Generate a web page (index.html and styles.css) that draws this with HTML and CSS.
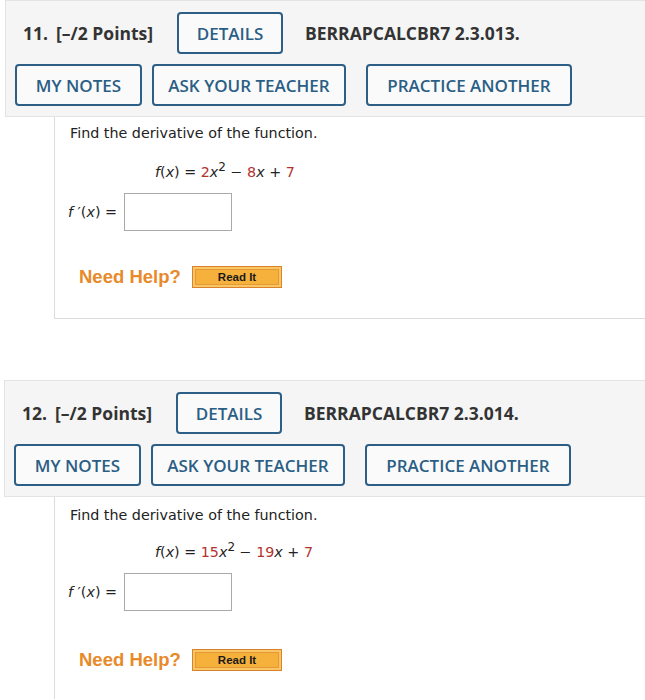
FILE: index.html
```html
<!DOCTYPE html>
<html>
<head>
<meta charset="utf-8">
<link rel="stylesheet" href="styles.css">
</head>
<body>
<div class="page">
  <section class="question">
    <div class="qhead">
      <div class="row1">
        <span class="qnum">11.</span>
        <span class="qpts">[–/2 Points]</span>
        <span class="btn b-details">DETAILS</span>
        <span class="qcode">BERRAPCALCBR7 2.3.013.</span>
      </div>
      <div class="row2">
        <span class="btn b-notes">MY NOTES</span>
        <span class="btn b-ask">ASK YOUR TEACHER</span>
        <span class="btn b-practice">PRACTICE ANOTHER</span>
      </div>
    </div>
    <div class="qbody">
      <p class="prompt">Find the derivative of the function.</p>
      <p class="eq"><i>f</i>(<i>x</i>) = <span class="num">2</span><i>x</i><sup>2</sup> − <span class="num">8</span><i>x</i> + <span class="num">7</span></p>
      <div class="answer"><span class="lbl"><i>f</i> ′(<i>x</i>) =</span><span class="box"></span></div>
      <div class="help"><span class="need">Need Help?</span><span class="readit">Read It</span></div>
    </div>
  </section>

  <section class="question second">
    <div class="qhead">
      <div class="row1">
        <span class="qnum">12.</span>
        <span class="qpts">[–/2 Points]</span>
        <span class="btn b-details">DETAILS</span>
        <span class="qcode">BERRAPCALCBR7 2.3.014.</span>
      </div>
      <div class="row2">
        <span class="btn b-notes">MY NOTES</span>
        <span class="btn b-ask">ASK YOUR TEACHER</span>
        <span class="btn b-practice">PRACTICE ANOTHER</span>
      </div>
    </div>
    <div class="qbody">
      <p class="prompt">Find the derivative of the function.</p>
      <p class="eq"><i>f</i>(<i>x</i>) = <span class="num">15</span><i>x</i><sup>2</sup> − <span class="num">19</span><i>x</i> + <span class="num">7</span></p>
      <div class="answer"><span class="lbl"><i>f</i> ′(<i>x</i>) =</span><span class="box"></span></div>
      <div class="help"><span class="need">Need Help?</span><span class="readit">Read It</span></div>
    </div>
  </section>
</div>
</body>
</html>
```

FILE: styles.css
```css
html, body {
  margin: 0;
  padding: 0;
  background: #ffffff;
}
.page {
  width: 645px;
  overflow: hidden;
}
.question {
  margin-left: 5px;
}
.question.second {
  margin-top: 61px;
  margin-left: 4px;
}
.qhead {
  box-sizing: border-box;
  width: 660px;
  height: 117px;
  background: #f5f5f5;
  border: 1px solid #e3e3e3;
  padding: 11px 0 0 9px;
  font-family: "Open Sans", "Liberation Sans", sans-serif;
}
.row1 {
  display: flex;
  align-items: center;
  height: 42px;
  padding-left: 8px;
  color: #333333;
  font-size: 17.5px;
  font-weight: 700;
}
.qnum {
  width: 33px;
}
.qpts {
  width: 121px;
}
.qcode {
  margin-left: 22px;
}
.row2 {
  display: flex;
  margin-top: 10px;
}
.btn {
  box-sizing: border-box;
  display: flex;
  align-items: center;
  justify-content: center;
  height: 42px;
  border: 2px solid #2d5f86;
  border-radius: 4px;
  background: #fafafa;
  color: #2b5e85;
  font-size: 17px;
  font-weight: 600;
}
.b-details { width: 106px; }
.b-notes { width: 127px; }
.b-ask { width: 194px; margin-left: 10px; }
.b-practice { width: 206px; margin-left: 20px; }

.qbody {
  margin-left: 49px;
  width: 660px;
  box-sizing: border-box;
  border-left: 1px solid #dcdcdc;
  border-bottom: 1px solid #dcdcdc;
  padding: 7px 0 30px 15px;
  font-family: "DejaVu Sans", Verdana, sans-serif;
  font-size: 14.3px;
  color: #222222;
}
.second .qbody {
  margin-left: 50px;
  padding-top: 9px;
  padding-bottom: 28px;
  border-bottom: none;
}
.second .eq {
  margin-top: 19px;
}
.second .help {
  margin-top: 38px;
}
.prompt {
  margin: 0;
  line-height: 18px;
}
.eq {
  margin: 21px 0 0 85px;
  line-height: 18px;
}
.eq i, .answer i {
  font-style: italic;
}
.eq sup {
  font-size: 12px;
  line-height: 0;
  vertical-align: 6px;
}
.num {
  color: #b3322e;
}
.answer {
  display: flex;
  align-items: center;
  margin-top: 12px;
  margin-left: -2px;
}
.lbl {
  width: 56px;
}
.box {
  box-sizing: border-box;
  width: 108px;
  height: 38px;
  border: 1px solid #a9a9a9;
  background: #ffffff;
}
.help {
  display: flex;
  align-items: center;
  margin-top: 35px;
  margin-left: 9px;
  height: 22px;
}
.need {
  font-family: "Liberation Sans", Arial, sans-serif;
  font-weight: 700;
  font-size: 18.5px;
  color: #e88a2a;
  width: 113px;
}
.readit {
  box-sizing: border-box;
  width: 90px;
  height: 22px;
  display: flex;
  align-items: center;
  justify-content: center;
  background: #f6b13d;
  border: 1px solid #d9822b;
  box-shadow: inset 0 0 0 2px #f9c565, inset 0 0 0 3px #e39a35;
  font-family: "Liberation Sans", Arial, sans-serif;
  font-weight: 700;
  font-size: 11.5px;
  color: #1a1a1a;
}
```
